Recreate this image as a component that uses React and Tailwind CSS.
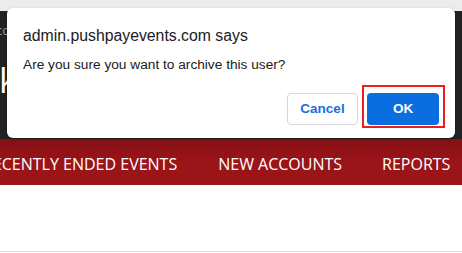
import React from "react";

export default function App() {
  return (
    <div className="relative w-[462px] h-[253px] overflow-hidden bg-white">
      {/* page behind the alert */}
      <div className="h-[11px] bg-[#ececec]" />
      <div className="h-[128px] bg-[#222222] overflow-hidden">
        <div
          className="text-[13px] leading-none text-[#9a9a9a] mt-[13px] -ml-[4px]"
          style={{ fontFamily: "'Open Sans', sans-serif" }}
        >
          cc
        </div>
        <div
          className="text-[34px] leading-none text-white mt-[26px] -ml-[1px]"
          style={{ fontFamily: "'Open Sans', sans-serif" }}
        >
          k
        </div>
      </div>
      <nav
        className="h-[46px] flex items-center bg-gradient-to-b from-[#861015] via-[#9a1418] to-[#9a1418] text-white text-[16px] whitespace-nowrap"
        style={{ fontFamily: "'Open Sans', sans-serif" }}
      >
        <span className="-ml-[17px] pt-[3px]">RECENTLY ENDED EVENTS</span>
        <span className="ml-[41px] pt-[3px]">NEW ACCOUNTS</span>
        <span className="ml-[40px] pt-[3px]">REPORTS</span>
      </nav>
      <div className="h-[66px]" />
      <div className="h-[1px] bg-[#e2e2e2]" />

      {/* alert dialog */}
      <div
        className="absolute left-[7px] top-[8px] w-[448px] h-[130px] bg-white rounded-[6px] shadow-[0_1px_3px_rgba(0,0,0,0.25)]"
        style={{ fontFamily: "'Liberation Sans', Arial, sans-serif" }}
      >
        <div className="pt-[18px] pl-[16px] text-[15.8px] leading-[20px] text-[#202020]">
          admin.pushpayevents.com says
        </div>
        <div className="pt-[10px] pl-[16px] text-[13.7px] leading-[18px] text-[#202020]">
          Are you sure you want to archive this user?
        </div>
        <div className="flex justify-end gap-[9px] pr-[16px] mt-[19px]">
          <button className="w-[71px] h-[32px] rounded-[4px] border border-[#d6d6d6] bg-white text-[#1a6fe0] text-[13.5px] font-bold">
            Cancel
          </button>
          <button className="w-[72px] h-[32px] rounded-[4px] bg-[#0b6ee0] text-white text-[13.5px] font-bold">
            OK
          </button>
        </div>
      </div>

      {/* highlight box around OK */}
      <div className="absolute left-[362px] top-[85px] w-[83px] h-[43px] border-2 border-[#ee1c1c]" />
    </div>
  );
}
